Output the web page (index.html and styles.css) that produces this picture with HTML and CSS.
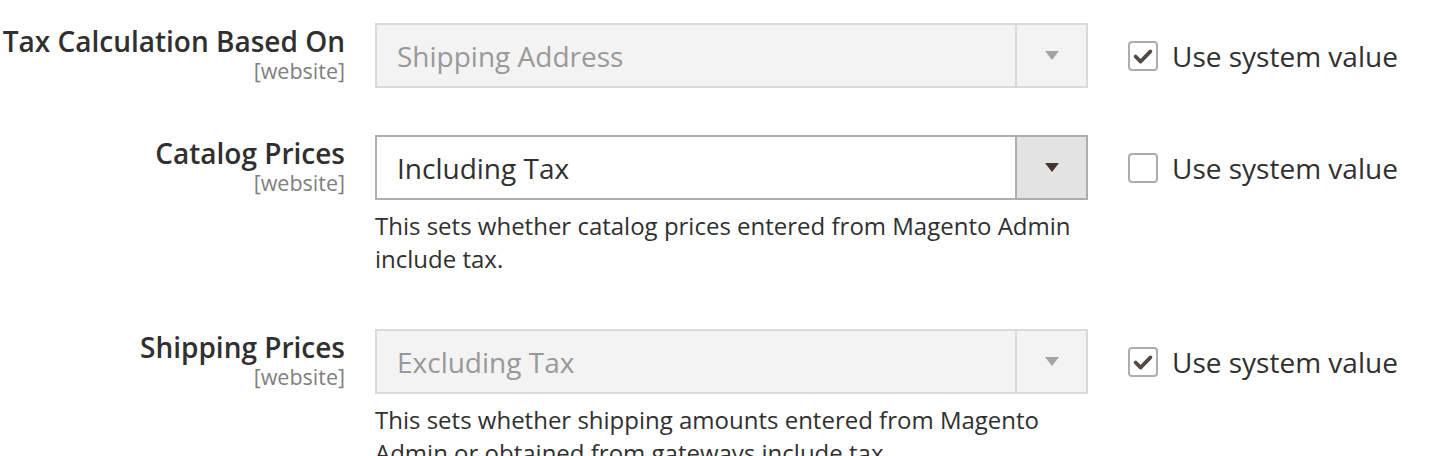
FILE: index.html
```html
<!DOCTYPE html>
<html lang="en">
<head>
<meta charset="utf-8">
<title>Tax settings</title>
<link rel="stylesheet" href="styles.css">
</head>
<body>
<div class="form">
  <div class="row">
    <div class="label">
      <span class="title">Tax Calculation Based On</span>
      <span class="scope">[website]</span>
    </div>
    <div class="control">
      <div class="select disabled">
        <span class="value">Shipping Address</span>
        <span class="arrow"><span class="tri"></span></span>
      </div>
    </div>
    <div class="use-default">
      <span class="cb checked"><svg viewBox="0 0 28 28" width="28" height="28"><polyline points="6,14.5 11.5,20 22,9" fill="none" stroke="#514943" stroke-width="4" stroke-linecap="round" stroke-linejoin="round"/></svg></span>
      <span class="cb-text">Use system value</span>
    </div>
  </div>

  <div class="row">
    <div class="label">
      <span class="title">Catalog Prices</span>
      <span class="scope">[website]</span>
    </div>
    <div class="control">
      <div class="select">
        <span class="value">Including Tax</span>
        <span class="arrow"><span class="tri"></span></span>
      </div>
      <p class="note">This sets whether catalog prices entered from Magento Admin include tax.</p>
    </div>
    <div class="use-default">
      <span class="cb"></span>
      <span class="cb-text">Use system value</span>
    </div>
  </div>

  <div class="row">
    <div class="label">
      <span class="title">Shipping Prices</span>
      <span class="scope">[website]</span>
    </div>
    <div class="control">
      <div class="select disabled">
        <span class="value">Excluding Tax</span>
        <span class="arrow"><span class="tri"></span></span>
      </div>
      <p class="note">This sets whether shipping amounts entered from Magento Admin or obtained from gateways include tax.</p>
    </div>
    <div class="use-default">
      <span class="cb checked"><svg viewBox="0 0 28 28" width="28" height="28"><polyline points="6,14.5 11.5,20 22,9" fill="none" stroke="#514943" stroke-width="4" stroke-linecap="round" stroke-linejoin="round"/></svg></span>
      <span class="cb-text">Use system value</span>
    </div>
  </div>
</div>
</body>
</html>
```

FILE: styles.css
```css
html, body {
  margin: 0;
  padding: 0;
  background: #ffffff;
}
body {
  font-family: "Open Sans", "Noto Sans", sans-serif;
  color: #303030;
  overflow: hidden;
}
.form {
  padding-top: 23px;
}
.row {
  display: grid;
  grid-template-columns: 345px 713px auto;
  column-gap: 30px;
  align-items: start;
  margin-bottom: 47px;
}
.row:nth-child(2) {
  margin-bottom: 54px;
}
.label {
  display: flex;
  flex-direction: column;
  align-items: flex-end;
  text-align: right;
}
.title {
  font-size: 28px;
  font-weight: 600;
  line-height: 36px;
  color: #303030;
  white-space: nowrap;
}
.scope {
  font-size: 21.5px;
  line-height: 24px;
  color: #808080;
}
.control {
  display: flex;
  flex-direction: column;
}
.select {
  display: flex;
  height: 65px;
  box-sizing: border-box;
  border: 2px solid #adadad;
  background: #ffffff;
}
.select .value {
  flex: 1;
  display: flex;
  align-items: center;
  padding-left: 20px;
  font-size: 28px;
  color: #303030;
}
.select .arrow {
  width: 69px;
  display: flex;
  align-items: center;
  justify-content: center;
  background: #e3e3e3;
  border-left: 2px solid #adadad;
}
.tri {
  width: 0;
  height: 0;
  border-left: 7px solid transparent;
  border-right: 7px solid transparent;
  border-top: 9px solid #41362f;
}
.select.disabled {
  background: #f3f3f3;
  border-color: #dadada;
}
.select.disabled .value {
  color: #999999;
}
.select.disabled .arrow {
  background: #f3f3f3;
  border-left-color: #dadada;
}
.select.disabled .tri {
  border-top-color: #a3a3a3;
}
.note {
  margin: 9px 0 0;
  font-size: 24px;
  line-height: 33px;
  color: #303030;
}
.use-default {
  display: flex;
  align-items: center;
  height: 65px;
  margin-left: 10px;
  gap: 14px;
}
.cb {
  width: 30px;
  height: 30px;
  box-sizing: border-box;
  border: 2px solid #adadad;
  border-radius: 4px;
  background: #ffffff;
  display: flex;
  align-items: center;
  justify-content: center;
}
.cb svg {
  display: block;
}
.cb-text {
  font-size: 28px;
  color: #303030;
  white-space: nowrap;
}
```
